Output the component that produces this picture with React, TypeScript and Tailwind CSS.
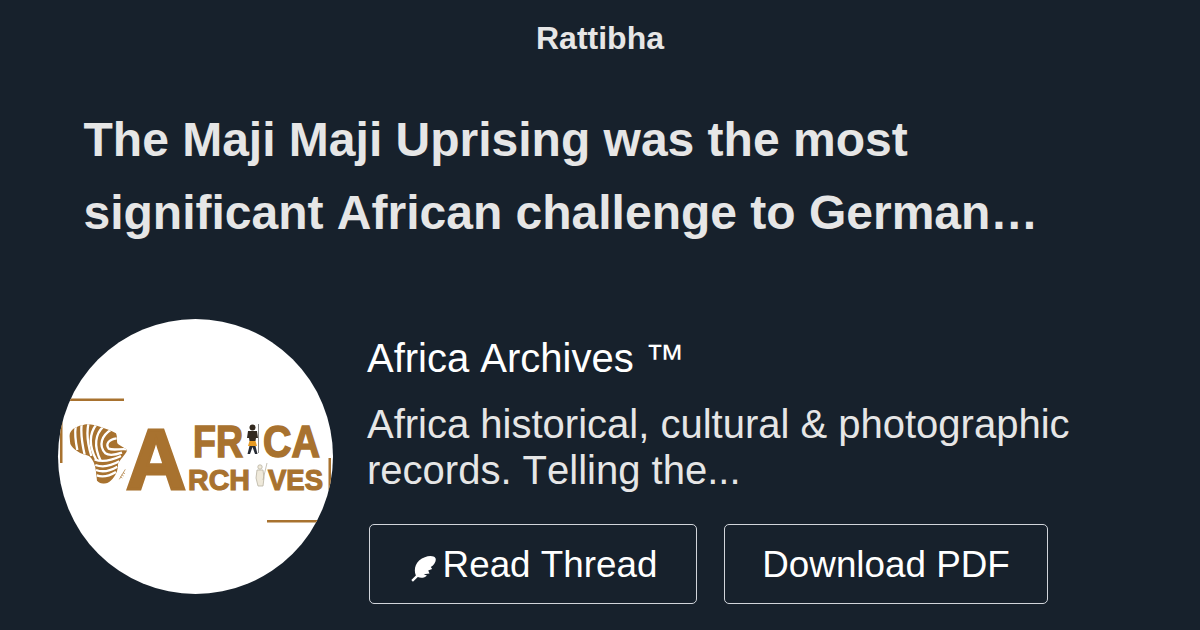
const B = "#a8722f";

function Logo() {
  const stripes = [
    "M29 20 C26 40 28 62 34 90",
    "M47 12 C44 38 46 62 56 104",
    "M68 8 C62 32 62 62 76 108",
    "M92 12 C70 40 66 72 90 118",
    "M112 20 C88 42 82 78 104 122",
    "M134 30 C108 46 96 76 118 100 C130 108 150 104 168 98",
    "M152 55 C128 58 118 72 128 86 C140 92 160 86 184 88",
    "M86 118 C108 128 135 122 165 108",
    "M88 135 C110 143 135 138 160 124",
    "M90 150 C110 158 132 153 154 140",
    "M92 166 C110 173 130 168 150 156",
  ];
  return (
    <svg viewBox="58 319 275 275" className="block h-full w-full">
      <rect x="70" y="398.5" width="54" height="2.5" fill={B} />
      <rect x="60" y="422" width="2.5" height="41" fill={B} />
      <rect x="328.5" y="458" width="2.5" height="32" fill={B} />
      <rect x="267" y="520" width="50" height="2.5" fill={B} />
      <g transform="translate(66 420) scale(0.3333)">
        <clipPath id="af">
          <path d="M10 48 C12 30 28 20 48 16 C60 10 82 12 102 20 C118 26 138 32 150 40 C156 55 150 65 156 72 C164 78 176 84 184 90 C176 108 162 118 156 132 C156 152 150 168 134 182 C122 194 104 194 93 182 C90 160 90 142 83 127 C75 110 70 106 55 104 C38 98 22 88 13 72 Z" />
        </clipPath>
        <g clipPath="url(#af)">
          <rect x="0" y="0" width="200" height="200" fill={B} />
          {stripes.map((d) => (
            <path key={d} d={d} fill="none" stroke="#fff" strokeWidth="7" />
          ))}
        </g>
        <path d="M160 178 L178 148 M163 170 L169 174 M167 164 L173 168 M171 158 L177 161" stroke={B} strokeWidth="2" fill="none" />
      </g>
      <g fontFamily="'Liberation Sans', Arial, sans-serif" fontWeight="700" fill={B} stroke={B}>
        <text x="126" y="489" fontSize="86" strokeWidth="3" textLength="60" lengthAdjust="spacingAndGlyphs">A</text>
        <text x="193" y="456.5" fontSize="44" strokeWidth="1.5" textLength="50" lengthAdjust="spacingAndGlyphs">FR</text>
        <text x="263" y="456.5" fontSize="44" strokeWidth="1.5" textLength="57" lengthAdjust="spacingAndGlyphs">CA</text>
        <text x="188" y="489.5" fontSize="30" strokeWidth="1.2" textLength="62" lengthAdjust="spacingAndGlyphs">RCH</text>
        <text x="268" y="489.5" fontSize="30" strokeWidth="1.2" textLength="55" lengthAdjust="spacingAndGlyphs">VES</text>
      </g>
      <g>
        <rect x="258" y="424" width="1" height="29" fill="#8a8a8a" />
        <circle cx="252.5" cy="427.5" r="3" fill="#33291f" />
        <path d="M248 431 H257 L258 438 L256 438 L255.5 441 H249.5 L249 438 L247 438 Z" fill="#33291f" />
        <path d="M249.5 441 H255.5 L257 446 H248 Z" fill="#e69a24" />
        <path d="M249.5 446 L247.5 454 H250 L252.5 447 L255 454 H257.5 L255.5 446 Z" fill="#262a33" />
      </g>
      <g fill="#efe9da" stroke="#b9b2a2" strokeWidth="0.8">
        <circle cx="260" cy="467" r="2.2" />
        <path d="M257 470 H263 L264 478 L263 486 H258 L256 478 Z" />
        <path d="M267 463 L263 480" fill="none" />
      </g>
    </svg>
  );
}

function Feather() {
  return (
    <svg viewBox="20 15 78 83" className="mt-[8px] h-[27px] w-[26px] shrink-0" fill="#fff">
      <path d="M94 24 C88 14 62 16 44 32 C30 46 28 64 34 78 L20 92 L25 97 L40 83 C52 88 62 84 68 78 L58 74 L76 72 L72 63 L84 58 L80 52 C92 44 98 32 94 24 Z" />
    </svg>
  );
}

export default function App() {
  return (
    <div className="flex h-[630px] w-[1200px] flex-col overflow-hidden bg-[#17212c] font-['Liberation_Sans',Arial,sans-serif] [font-kerning:none]">
      <div className="pt-[19px] text-center text-[32px] leading-[38px] font-bold text-[#e6e6e6]">Rattibha</div>
      <h1 className="mt-[46px] h-[216px] px-[83.5px] text-[48px] leading-[73px] font-bold text-[#e6e6e6]">
        The Maji Maji Uprising was the most
        <br />
        significant African challenge to German…
      </h1>
      <div className="flex pl-[58px]">
        <div className="h-[275px] w-[275px] shrink-0 overflow-hidden rounded-full bg-white">
          <Logo />
        </div>
        <div className="ml-[34px] flex flex-col">
          <div className="mt-[15px] text-[40px] leading-[48px] text-white">Africa Archives ™</div>
          <div className="mt-[19px] text-[40px] leading-[46px] text-[#e6e6e6]">
            Africa historical, cultural &amp; photographic
            <br />
            records. Telling the...
          </div>
          <div className="mt-[31px] ml-[2px] flex gap-[27px]">
            <div className="flex h-[80px] w-[328px] items-center justify-center gap-[6px] rounded-[5px] border border-[#d1d5db] pt-[1px] pl-[2px] text-[36.8px] text-white">
              <Feather />
              <span>Read Thread</span>
            </div>
            <div className="flex h-[80px] w-[324px] items-center justify-center rounded-[5px] border border-[#d1d5db] pt-[1px] text-[36.8px] text-white">
              Download PDF
            </div>
          </div>
        </div>
      </div>
    </div>
  );
}
